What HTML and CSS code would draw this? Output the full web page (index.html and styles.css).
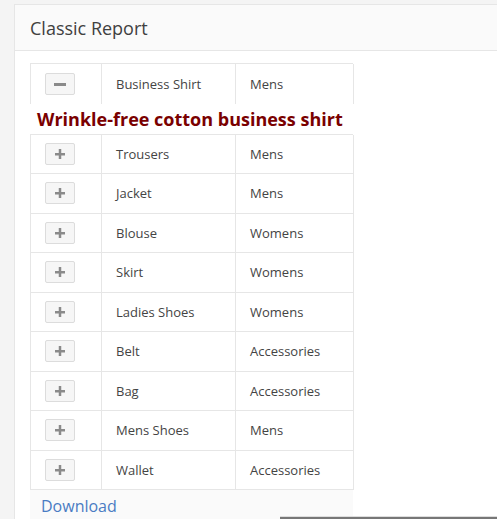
FILE: index.html
```
<!DOCTYPE html>
<html>
<head>
<meta charset="utf-8">
<link rel="stylesheet" href="styles.css">
</head>
<body>
<div class="panel">
  <div class="panel-header">Classic Report</div>
  <div class="panel-body">
    <div class="report">
      <div class="grid first">
        <div class="cell btn-cell"><span class="btn"><svg width="12" height="12" viewBox="0 0 12 12"><rect x="0" y="5" width="12" height="3" fill="#8a8a8a"/></svg></span></div>
        <div class="cell">Business Shirt</div>
        <div class="cell">Mens</div>
      </div>
      <div class="details">Wrinkle-free cotton business shirt</div>
      <div class="grid">
        <div class="cell btn-cell"><span class="btn"><svg width="10" height="10" viewBox="0 0 10 10"><path d="M0 4h10v2.5H0zM3.75 0h2.5v10h-2.5z" fill="#8a8a8a"/></svg></span></div>
        <div class="cell">Trousers</div><div class="cell">Mens</div>
        <div class="cell btn-cell"><span class="btn"><svg width="10" height="10" viewBox="0 0 10 10"><path d="M0 4h10v2.5H0zM3.75 0h2.5v10h-2.5z" fill="#8a8a8a"/></svg></span></div>
        <div class="cell">Jacket</div><div class="cell">Mens</div>
        <div class="cell btn-cell"><span class="btn"><svg width="10" height="10" viewBox="0 0 10 10"><path d="M0 4h10v2.5H0zM3.75 0h2.5v10h-2.5z" fill="#8a8a8a"/></svg></span></div>
        <div class="cell">Blouse</div><div class="cell">Womens</div>
        <div class="cell btn-cell"><span class="btn"><svg width="10" height="10" viewBox="0 0 10 10"><path d="M0 4h10v2.5H0zM3.75 0h2.5v10h-2.5z" fill="#8a8a8a"/></svg></span></div>
        <div class="cell">Skirt</div><div class="cell">Womens</div>
        <div class="cell btn-cell"><span class="btn"><svg width="10" height="10" viewBox="0 0 10 10"><path d="M0 4h10v2.5H0zM3.75 0h2.5v10h-2.5z" fill="#8a8a8a"/></svg></span></div>
        <div class="cell">Ladies Shoes</div><div class="cell">Womens</div>
        <div class="cell btn-cell"><span class="btn"><svg width="10" height="10" viewBox="0 0 10 10"><path d="M0 4h10v2.5H0zM3.75 0h2.5v10h-2.5z" fill="#8a8a8a"/></svg></span></div>
        <div class="cell">Belt</div><div class="cell">Accessories</div>
        <div class="cell btn-cell"><span class="btn"><svg width="10" height="10" viewBox="0 0 10 10"><path d="M0 4h10v2.5H0zM3.75 0h2.5v10h-2.5z" fill="#8a8a8a"/></svg></span></div>
        <div class="cell">Bag</div><div class="cell">Accessories</div>
        <div class="cell btn-cell"><span class="btn"><svg width="10" height="10" viewBox="0 0 10 10"><path d="M0 4h10v2.5H0zM3.75 0h2.5v10h-2.5z" fill="#8a8a8a"/></svg></span></div>
        <div class="cell">Mens Shoes</div><div class="cell">Mens</div>
        <div class="cell btn-cell"><span class="btn"><svg width="10" height="10" viewBox="0 0 10 10"><path d="M0 4h10v2.5H0zM3.75 0h2.5v10h-2.5z" fill="#8a8a8a"/></svg></span></div>
        <div class="cell">Wallet</div><div class="cell">Accessories</div>
      </div>
      <div class="footer"><a class="download" href="#">Download</a></div>
    </div>
  </div>
</div>
<div class="hbar"></div>
</body>
</html>
```
FILE: styles.css
```
html, body {
  margin: 0;
  padding: 0;
  height: 100%;
  overflow: hidden;
}
body {
  background: #f4f4f4;
  font-family: "Open Sans", "Noto Sans", sans-serif;
  color: #404040;
  padding-top: 4px;
  box-sizing: border-box;
}
.panel {
  margin-left: 14px;
  background: #fff;
  border-left: 1px solid #e6e6e6;
  border-top: 1px solid #e6e6e6;
  height: calc(100vh - 4px);
  box-sizing: border-box;
}
.panel-header {
  height: 46px;
  box-sizing: border-box;
  padding-left: 15px;
  display: flex;
  align-items: center;
  font-size: 18px;
  color: #404040;
  background: #fafafa;
  border-bottom: 1px solid #e6e6e6;
}
.panel-body {
  padding: 12px 0 0 15px;
}
.report {
  width: 323px;
}
.grid {
  display: grid;
  grid-template-columns: 71px 134px 118px;
  grid-auto-rows: 39.5px;
  border-top: 1px solid #e6e6e6;
  border-left: 1px solid #e6e6e6;
  box-sizing: border-box;
}
.grid.first .cell {
  border-bottom: none;
}
.cell {
  border-right: 1px solid #e6e6e6;
  border-bottom: 1px solid #e6e6e6;
  box-sizing: border-box;
  padding: 0 14px;
  display: flex;
  align-items: center;
  font-size: 13px;
  color: #444;
}
.btn-cell {
  padding-left: 14px;
}
.btn {
  width: 30px;
  height: 22px;
  box-sizing: border-box;
  border: 1px solid #dcdcdc;
  border-radius: 2px;
  background: #f6f6f6;
  display: flex;
  align-items: center;
  justify-content: center;
}
.details {
  height: 30px;
  padding-left: 7px;
  display: flex;
  align-items: center;
  font-size: 18px;
  font-weight: 700;
  color: #7a0000;
  white-space: nowrap;
}
.footer {
  background: #fafafa;
  height: 40px;
  padding: 5px 0 0 11px;
  box-sizing: border-box;
}
.download {
  color: #4a7cc3;
  text-decoration: none;
  font-size: 16px;
}
.hbar {
  position: absolute;
  left: 280px;
  right: 0;
  top: 516px;
  height: 3px;
  background: #777;
  border-top: 1px solid #ddd;
}
```
